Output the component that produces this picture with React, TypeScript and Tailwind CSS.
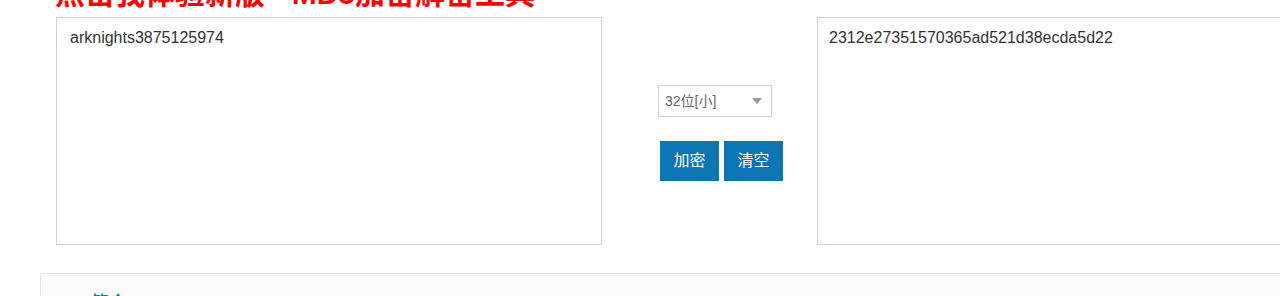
export default function App() {
  return (
    <div className="w-[1280px] h-[296px] overflow-hidden bg-white font-['Liberation_Sans','Noto_Sans_CJK_SC',sans-serif]">
      {/* 标题 */}
      <div className="-mt-[21px] h-[30px] pl-[55px] text-[30px] leading-[30px] font-bold text-[#ff0000] whitespace-nowrap">
        点击我体验新版 - MD5加密解密工具
      </div>

      {/* 加密区域 */}
      <div className="mt-[8px] flex pl-[56px] w-[1400px]">
        <textarea
          defaultValue="arknights3875125974"
          className="w-[546px] h-[228px] shrink-0 resize-none border border-[#ccd2e0] px-[13px] py-[10px] text-[16px] leading-[20px] text-[#333] outline-none"
        />
        <div className="w-[215px] shrink-0 flex flex-col">
          <div className="mt-[68px] ml-[56px] w-[114px] h-[32px] border border-[#ccd2e0] flex items-center justify-between pl-[6px] pr-[9px] text-[14px] text-[#666]">
            <span>32位[小]</span>
            <span className="w-0 h-0 border-l-[5px] border-r-[5px] border-t-[6px] border-l-transparent border-r-transparent border-t-[#999]" />
          </div>
          <div className="mt-[24px] ml-[58px] flex gap-[5px]">
            <button className="w-[59px] h-[40px] bg-[#0a77b4] text-white text-[16px]">加密</button>
            <button className="w-[59px] h-[40px] bg-[#0a77b4] text-white text-[16px]">清空</button>
          </div>
        </div>
        <textarea
          defaultValue="2312e27351570365ad521d38ecda5d22"
          className="w-[546px] h-[228px] shrink-0 resize-none border border-[#ccd2e0] px-[11px] py-[10px] text-[16px] leading-[20px] text-[#333] outline-none"
        />
      </div>

      {/* 说明 */}
      <div className="mt-[28px] ml-[40px] h-[100px] border-t border-l border-[#e6e6e6] bg-[#fcfcfc] pl-[50px] pt-[16px]">
        <span className="text-[18px] text-[#0a77b4]">简介</span>
      </div>
    </div>
  );
}
